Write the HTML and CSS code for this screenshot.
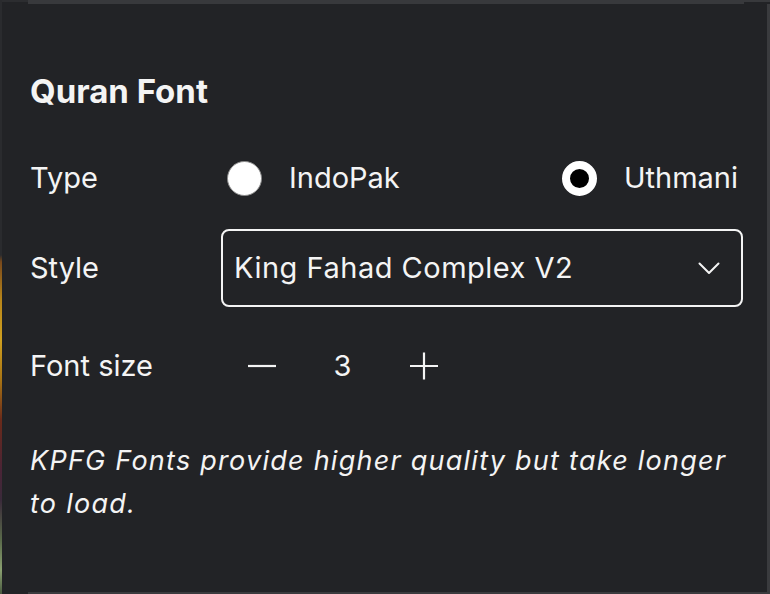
FILE: index.html
```html
<!DOCTYPE html>
<html lang="en">
<head>
<meta charset="utf-8">
<title>Quran Font</title>
<link rel="stylesheet" href="styles.css">
</head>
<body>
<div class="frame">
  <div class="edge-left"></div>
  <div class="main">
    <div class="topbar">
      <div class="seg seg-a"></div>
      <div class="seg seg-b"></div>
      <div class="seg seg-c"></div>
    </div>
    <div class="content">
      <section class="panel">
        <h2 class="title">Quran Font</h2>
        <div class="row row-type">
          <div class="label">Type</div>
          <div class="radios">
            <label class="option">
              <span class="radio"></span>
              <span class="option-text">IndoPak</span>
            </label>
            <label class="option">
              <span class="radio radio-checked"></span>
              <span class="option-text">Uthmani</span>
            </label>
          </div>
        </div>
        <div class="row row-style">
          <div class="label">Style</div>
          <div class="select">
            <span class="select-text">King Fahad Complex V2</span>
            <svg class="chevron" width="22" height="13" viewBox="0 0 22 13"><path d="M1.5 1.5 L11 11 L20.5 1.5" fill="none" stroke="#f4f4f4" stroke-width="2" stroke-linecap="round" stroke-linejoin="round"/></svg>
          </div>
        </div>
        <div class="row row-size">
          <div class="label">Font size</div>
          <div class="stepper">
            <span class="step">
              <svg width="30" height="30" viewBox="0 0 30 30"><path d="M1 15 H29" stroke="#f4f4f4" stroke-width="2.2"/></svg>
            </span>
            <span class="step value">3</span>
            <span class="step">
              <svg width="30" height="30" viewBox="0 0 30 30"><path d="M1 15 H29 M15 1.5 V28.5" stroke="#f4f4f4" stroke-width="2.2"/></svg>
            </span>
          </div>
        </div>
        <p class="note">KPFG Fonts provide higher quality but take longer to load.</p>
      </section>
      <div class="edge-right"></div>
    </div>
    <div class="bottombar"></div>
  </div>
</div>
</body>
</html>
```
FILE: styles.css
```css
html, body {
  margin: 0;
  padding: 0;
}
body {
  width: 770px;
  height: 594px;
  overflow: hidden;
  background: #222326;
  color: #f4f4f4;
  font-family: "Inter", "Noto Sans", sans-serif;
}
.frame {
  display: flex;
  height: 594px;
}
.edge-left {
  width: 2px;
  flex: none;
  background: linear-gradient(to bottom,
    #2a2b2e 0px, #2a2b2e 255px,
    #7a4a1c 262px, #b8861a 300px, #d0a020 340px, #a87414 380px,
    #6a2a1a 420px, #4a2436 470px, #3a2a3a 500px, #5a6a4a 540px, #8aa070 570px, #4a5a40 594px);
}
.main {
  flex: 1;
  display: flex;
  flex-direction: column;
  min-width: 0;
}
.topbar {
  display: flex;
  height: 4px;
  flex: none;
}
.seg {
  background: #36373a;
}
.seg-a {
  width: 26px;
  height: 2px;
  background: #2c2d30;
}
.seg-b {
  width: 716px;
  height: 4px;
  background: #38393c;
}
.seg-c {
  flex: 1;
  height: 2px;
  background: #38393c;
}
.content {
  flex: 1;
  display: flex;
  min-height: 0;
}
.panel {
  flex: 1;
  padding: 67px 24px 0 28px;
}
.edge-right {
  width: 3px;
  flex: none;
  background: #3a3b3e;
}
.bottombar {
  height: 2px;
  flex: none;
  margin-left: 26px;
  background: #3a3b3e;
}
.title {
  margin: 0;
  font-size: 33px;
  line-height: 40px;
  font-weight: 700;
}
.row {
  display: flex;
  align-items: center;
}
.label {
  width: 191px;
  flex: none;
  font-size: 29px;
  line-height: 36px;
}
.row-type {
  height: 62px;
  margin-top: 36px;
}
.radios {
  flex: 1;
  display: flex;
  justify-content: space-between;
  padding: 0 5px 0 6px;
}
.option {
  display: flex;
  align-items: center;
  gap: 27px;
}
.option-text {
  font-size: 29px;
  line-height: 36px;
}
.radio {
  width: 35px;
  height: 35px;
  box-sizing: border-box;
  border-radius: 50%;
  background: #ffffff;
  border: 1.5px solid #8a8a8a;
}
.radio-checked {
  background: #000000;
  border: 8px solid #ffffff;
}
.row-style {
  margin-top: 20px;
}
.select {
  flex: 1;
  height: 78px;
  box-sizing: border-box;
  border: 2px solid #f4f4f4;
  border-radius: 8px;
  display: flex;
  align-items: center;
  justify-content: space-between;
  padding: 0 21px 0 11px;
}
.select-text {
  font-size: 29px;
  line-height: 36px;
  letter-spacing: 0.5px;
}
.chevron {
  display: block;
}
.row-size {
  height: 60px;
  margin-top: 29px;
}
.stepper {
  display: flex;
  align-items: center;
}
.step {
  width: 81px;
  height: 40px;
  display: flex;
  align-items: center;
  justify-content: center;
}
.step svg {
  display: block;
}
.value {
  font-size: 29px;
  line-height: 36px;
}
.note {
  margin: 43px 0 0;
  font-size: 27px;
  line-height: 43px;
  font-style: italic;
  letter-spacing: 1.25px;
}
```
